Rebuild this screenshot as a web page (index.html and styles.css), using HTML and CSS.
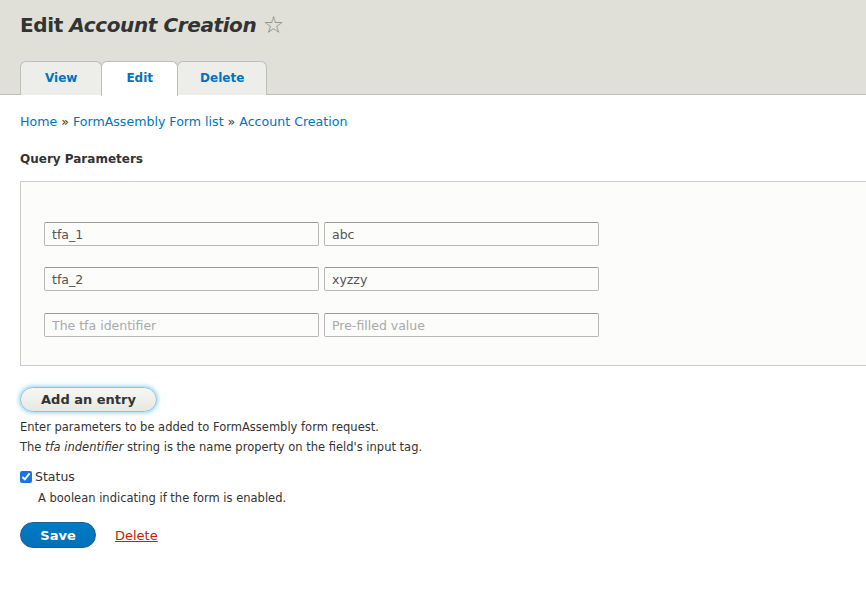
FILE: index.html
```html
<!DOCTYPE html>
<html lang="en">
  <head>
    <meta charset="UTF-8" />
    <meta name="viewport" content="width=device-width, initial-scale=1.0" />
    <title>Edit Account Creation</title>
    <link rel="stylesheet" href="styles.css">
  </head>
  <body>
    <div class="header">
      <h1 class="page-title">Edit <em>Account Creation</em> <span class="star">&#9734;</span></h1>
      <ul class="tabs">
        <li><a href="#">View</a></li>
        <li class="active"><a href="#">Edit</a></li>
        <li><a href="#">Delete</a></li>
      </ul>
    </div>

    <div class="content">
      <div class="breadcrumb">
        <a href="#">Home</a> &raquo; <a href="#">FormAssembly Form list</a> &raquo; <a href="#">Account Creation</a>
      </div>

      <h4 class="label">Query Parameters</h4>
      <div class="fieldset">
        <div class="row">
          <input type="text" value="tfa_1" />
          <input type="text" value="abc" />
        </div>
        <div class="row">
          <input type="text" value="tfa_2" />
          <input type="text" value="xyzzy" />
        </div>
        <div class="row">
          <input type="text" placeholder="The tfa identifier" />
          <input type="text" placeholder="Pre-filled value" />
        </div>
      </div>

      <button class="button add">Add an entry</button>
      <p class="description">Enter parameters to be added to FormAssembly form request.</p>
      <p class="description">The <em>tfa indentifier</em> string is the name property on the field's input tag.</p>

      <div class="checkbox">
        <label><input type="checkbox" checked /> Status</label>
        <p class="description">A boolean indicating if the form is enabled.</p>
      </div>

      <div class="actions">
        <button class="button primary">Save</button>
        <a href="#" class="delete">Delete</a>
      </div>
    </div>
  </body>
</html>
```

FILE: styles.css
```css
* {
  margin: 0;
  padding: 0;
  box-sizing: border-box;
}
body {
  font-family: "DejaVu Sans", Verdana, sans-serif;
  font-size: 12.5px;
  color: #333;
  background: #fff;
  overflow: hidden;
}
a {
  color: #0074bd;
  text-decoration: none;
}

.header {
  background-color: #e0e0d8;
  border-bottom: 1px solid #bfbfba;
  padding: 11px 20px 0;
  height: 95px;
}
.page-title {
  font-size: 20px;
  font-weight: bold;
  color: #333;
  line-height: 28px;
  letter-spacing: -0.4px;

  em {
    font-style: italic;
  }
  .star {
    font-weight: normal;
    color: #8a8a80;
    font-size: 24px;
    vertical-align: -1px;
  }
}
.tabs {
  list-style: none;
  display: flex;
  margin-top: 22px;

  li {
    height: 34px;
    background-color: #ededea;
    border: 1px solid #bfbfba;
    border-bottom: none;
    border-radius: 6px 6px 0 0;
    margin-right: -1px;
  }
  li.active {
    background-color: #fff;
    height: 35px;
  }
  a {
    display: block;
    font-weight: bold;
    font-size: 12px;
    line-height: 33px;
    padding: 0 24px;
  }
  li:last-child a {
    padding: 0 22px;
  }
}

.content {
  padding: 18px 20px 0;
}
.breadcrumb {
  font-size: 12.6px;
  line-height: 18px;
}
.label {
  font-size: 12px;
  font-weight: bold;
  margin-top: 19px;
  line-height: 18px;
}
.fieldset {
  margin-top: 13px;
  margin-right: -30px;
  background-color: #fcfcfa;
  border: 1px solid #ccc;
  padding: 40px 23px 28px;

  .row {
    display: flex;
    gap: 5px;
    margin-bottom: 21px;
  }
  .row:nth-child(2) {
    margin-bottom: 22px;
  }
  .row:last-child {
    margin-bottom: 0;
  }
  input {
    width: 275px;
    height: 24px;
    border: 1px solid #b8b8b8;
    border-top-color: #999;
    border-radius: 2px;
    background: #fcfcfa;
    font-family: inherit;
    font-size: 12.5px;
    color: #555;
    padding: 0 7px;
    outline: none;
  }
  input::placeholder {
    color: #aaa;
  }
}

.button {
  font-family: inherit;
  font-weight: bold;
  border-radius: 20px;
  cursor: pointer;
}
.add {
  margin-top: 21px;
  width: 137px;
  height: 25px;
  font-size: 13px;
  color: #333;
  background: linear-gradient(#f6f6f3, #e8e8e3);
  border: 1px solid #8ac0e6;
  box-shadow: 0 0 4px 1px #8fd4f5;
}
.description {
  font-size: 11.5px;
  line-height: 20px;
  color: #333;
}
.add + .description {
  margin-top: 5px;
}
.checkbox {
  margin-top: 10px;

  label {
    font-size: 12.5px;
    display: flex;
    align-items: center;
    gap: 3px;
    line-height: 20px;
  }
  input {
    width: 12px;
    height: 12px;
    accent-color: #1a73e8;
  }
  .description {
    padding-left: 18px;
    margin-top: 1px;
  }
}
.actions {
  margin-top: 14px;
  display: flex;
  align-items: center;
  gap: 19px;
}
.primary {
  width: 76px;
  height: 26px;
  font-size: 13px;
  color: #fff;
  background: linear-gradient(#007bc6, #0071b8);
  border: 1px solid #1e5c90;
}
.delete {
  color: #c72100;
  text-decoration: underline;
  font-size: 13px;
}
```
